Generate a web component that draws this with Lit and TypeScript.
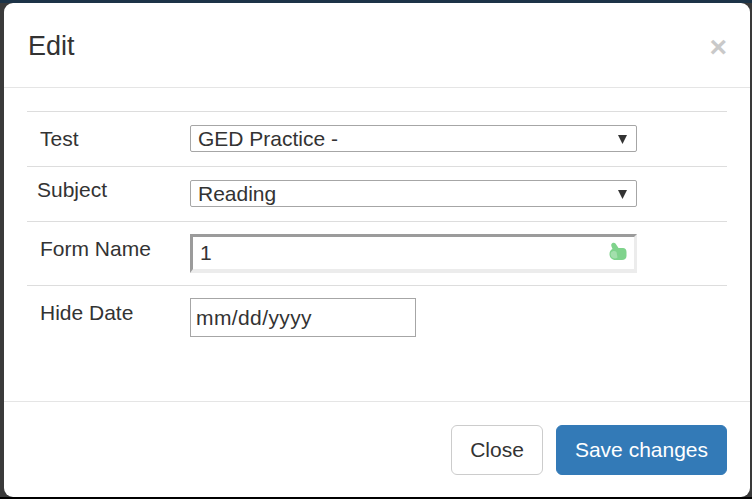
import { LitElement, html, css } from "lit";
import { customElement } from "lit/decorators.js";

@customElement("app-root")
export class AppRoot extends LitElement {
  static styles = css`
    :host { display: block; width: 752px; height: 499px; overflow: hidden; font-family: "Liberation Sans", Arial, sans-serif; color: #333; }
    .backdrop {
      box-sizing: border-box; width: 752px; height: 499px; padding: 3px 2px 2px 4px;
      background: linear-gradient(to bottom, #1c3347 0, #1c3347 3px, #3a3a3a 3px, #3a3a3a 497px, #000 497px);
    }
    .modal {
      box-sizing: border-box; height: 494px; background: #fff; border-radius: 9px;
      display: flex; flex-direction: column;
    }
    .head {
      box-sizing: border-box; height: 85px; flex: none; display: flex; justify-content: space-between;
      padding: 27px 23px 0 24px; border-bottom: 1px solid #e5e5e5;
    }
    .title { font-size: 27px; line-height: 32px; color: #333; }
    .close {
      font-size: 30px; line-height: 30px; font-weight: 700; color: #c9c9c9; margin-top: 2px;
    }
    .body { flex: 1; padding: 23px 23px 0 23px; }
    .row {
      display: grid; grid-template-columns: 163px 1fr; border-top: 1px solid #ddd; box-sizing: border-box;
    }
    .row.r1 { height: 55px; padding-top: 13px; }
    .row.r2 { height: 55px; padding-top: 13px; }
    .row.r3 { height: 64px; padding-top: 12px; }
    .row.r4 { height: 64px; padding-top: 12px; }
    .label { font-size: 21px; line-height: 26px; padding-left: 13px; color: #333; }
    .r1 .label { margin-top: 1px; }
    .r2 .label { padding-left: 10px; margin-top: -3px; }
    .r3 .label, .r4 .label { margin-top: 2px; }
    .select {
      box-sizing: border-box; width: 447px; height: 27px; border: 1px solid #a6a6a6; border-radius: 2px;
      display: flex; align-items: center; justify-content: space-between; padding: 0 9px 0 7px;
      font-size: 21px; color: #333;
    }
    .arrow { width: 9px; height: 9px; fill: #333; flex: none; margin-top: 1px; }
    .input {
      box-sizing: border-box; width: 447px; height: 39px; display: flex; align-items: center; justify-content: space-between;
      border-style: solid; border-width: 3px 3px 4px 3px; border-color: #9b9b9b #ececec #ececec #9b9b9b;
      padding: 0 7px 0 7px; font-size: 21px; color: #333;
    }
    .hand { width: 18px; height: 19px; flex: none; margin-top: -4px; }
    .date {
      box-sizing: border-box; width: 226px; height: 39px; border: 1px solid #a6a6a6; display: flex; align-items: center;
      padding: 0 5px; font-size: 21px; letter-spacing: 0.4px; color: #333;
    }
    .foot {
      box-sizing: border-box; height: 96px; flex: none; border-top: 1px solid #e5e5e5;
      display: flex; justify-content: flex-end; gap: 13px; padding: 23px 23px 0 0;
    }
    .btn {
      box-sizing: border-box; height: 50px; border-radius: 6px; display: flex; align-items: center; justify-content: center;
      font-size: 21px;
    }
    .default { width: 92px; border: 1px solid #ccc; color: #333; background: #fff; }
    .primary { width: 171px; background: #337ab7; color: #fff; border: 1px solid #337ab7; }
  `;

  private arrow() {
    return html`<svg class="arrow" viewBox="0 0 9 9"><path d="M0 0h9L4.500 9z"></path></svg>`;
  }

  render() {
    return html`
      <div class="backdrop">
        <div class="modal">
          <div class="head">
            <div class="title">Edit</div>
            <div class="close">×</div>
          </div>
          <div class="body">
            <div class="row r1">
              <div class="label">Test</div>
              <div class="select"><span>GED Practice -</span>${this.arrow()}</div>
            </div>
            <div class="row r2">
              <div class="label">Subject</div>
              <div class="select"><span>Reading</span>${this.arrow()}</div>
            </div>
            <div class="row r3">
              <div class="label">Form Name</div>
              <div class="input">
                <span>1</span>
                <svg class="hand" viewBox="0 0 18 19">
                  <path fill="#7fd38c" d="M2.500 2C3.500 .500 5.500 .500 6.500 1.500L9.500 6H14C16 6 17.500 7.500 17.500 10V14C17.500 16.500 15.500 18 13 18H6.500C3 18 .500 15.500 .500 12C.500 9.500 1.500 8 3.500 7L2.500 4.500C2.200 3.500 2.100 2.700 2.500 2Z"></path>
                  <path fill="#a3dfac" d="M2 10.500C3.500 8.500 6 8.500 7.500 10L8.500 15.500C6.500 17 4 16.500 2.500 15C1.500 13.500 1.500 11.500 2 10.500Z"></path>
                </svg>
              </div>
            </div>
            <div class="row r4">
              <div class="label">Hide Date</div>
              <div class="date">mm/dd/yyyy</div>
            </div>
          </div>
          <div class="foot">
            <div class="btn default">Close</div>
            <div class="btn primary">Save changes</div>
          </div>
        </div>
      </div>
    `;
  }
}
